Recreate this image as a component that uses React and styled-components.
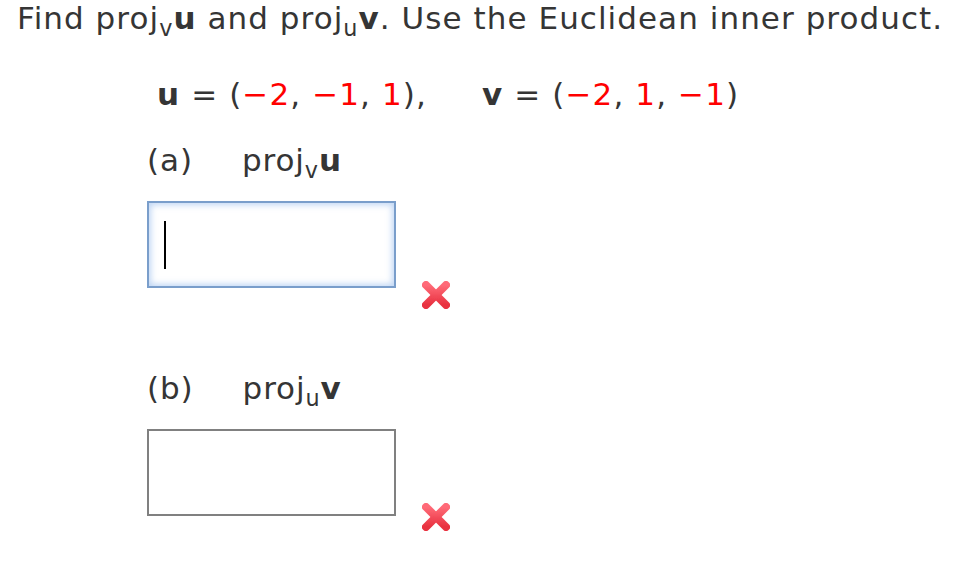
import React from 'react';
import styled, { createGlobalStyle } from 'styled-components';

const GlobalStyle = createGlobalStyle`
  html, body {
    margin: 0;
    padding: 0;
    background: #ffffff;
  }
  body {
    font-family: "DejaVu Sans", Verdana, sans-serif;
    color: #353535;
  }
`;

const Page = styled.div`
  width: 980px;
  height: 563px;
  padding: 0 0 0 17px;
  box-sizing: border-box;
  overflow: hidden;
`;

const Title = styled.div`
  font-size: 31px;
  line-height: 36px;
  letter-spacing: 1.05px;
  white-space: nowrap;
`;

const Sub = styled.sub`
  font-size: 0.72em;
  vertical-align: -0.3em;
  line-height: 0;
`;

const Bold = styled.b`
  font-weight: bold;
`;

const Equations = styled.div`
  display: flex;
  gap: 55px;
  margin: 40px 0 0 140px;
  font-size: 31px;
  line-height: 36px;
  letter-spacing: 1.1px;
  white-space: nowrap;
`;

const Red = styled.span`
  color: #ff0000;
`;

const Part = styled.div`
  margin-left: 130px;
  margin-top: ${(p) => p.$top}px;
`;

const PartLabel = styled.div`
  display: flex;
  gap: 49px;
  font-size: 31px;
  line-height: 36px;
  letter-spacing: 0.9px;
  white-space: nowrap;
`;

const AnswerRow = styled.div`
  display: flex;
  align-items: flex-end;
  margin-top: ${(p) => p.$top}px;
`;

const AnswerBox = styled.div`
  position: relative;
  width: 249px;
  height: 87px;
  box-sizing: border-box;
  background: #ffffff;
  border: 2px solid ${(p) => (p.$focused ? '#7a9ecb' : '#808080')};
  box-shadow: ${(p) => (p.$focused ? 'inset 0 0 6px 2px rgba(140, 180, 235, 0.55)' : 'none')};
`;

const Caret = styled.span`
  position: absolute;
  left: 15px;
  top: 18px;
  width: 2px;
  height: 48px;
  background: #000000;
`;

const WrongMark = styled.svg`
  width: 34px;
  height: 34px;
  margin-left: 23px;
  margin-bottom: ${(p) => p.$bottom}px;
  flex-shrink: 0;
`;

const Cross = ({ bottom }) => (
  <WrongMark $bottom={bottom} viewBox="0 0 34 34">
    <defs>
      <linearGradient id="xg" x1="0" y1="0" x2="0" y2="1">
        <stop offset="0" stopColor="#ff6b78" />
        <stop offset="1" stopColor="#e8303f" />
      </linearGradient>
      <filter id="soft" x="-20%" y="-20%" width="140%" height="140%">
        <feGaussianBlur stdDeviation="0.7" />
      </filter>
    </defs>
    <g filter="url(#soft)" stroke="url(#xg)" strokeWidth="8" strokeLinecap="round">
      <line x1="7" y1="7" x2="27" y2="27" />
      <line x1="27" y1="7" x2="7" y2="27" />
    </g>
  </WrongMark>
);

const App = () => (
  <>
    <GlobalStyle />
    <Page>
      <Title>
        Find proj<Sub>v</Sub><Bold>u</Bold> and proj<Sub>u</Sub><Bold>v</Bold>. Use the Euclidean inner product.
      </Title>

      <Equations>
        <span>
          <Bold>u</Bold> = (<Red>−2</Red>, <Red>−1</Red>, <Red>1</Red>),
        </span>
        <span>
          <Bold>v</Bold> = (<Red>−2</Red>, <Red>1</Red>, <Red>−1</Red>)
        </span>
      </Equations>

      <Part $top={30}>
        <PartLabel>
          <span>(a)</span>
          <span>
            proj<Sub>v</Sub><Bold>u</Bold>
          </span>
        </PartLabel>
        <AnswerRow $top={23}>
          <AnswerBox $focused>
            <Caret />
          </AnswerBox>
          <Cross bottom={-24} />
        </AnswerRow>
      </Part>

      <Part $top={82}>
        <PartLabel>
          <span>(b)</span>
          <span>
            proj<Sub>u</Sub><Bold>v</Bold>
          </span>
        </PartLabel>
        <AnswerRow $top={23}>
          <AnswerBox />
          <Cross bottom={-18} />
        </AnswerRow>
      </Part>
    </Page>
  </>
);

export default App;
